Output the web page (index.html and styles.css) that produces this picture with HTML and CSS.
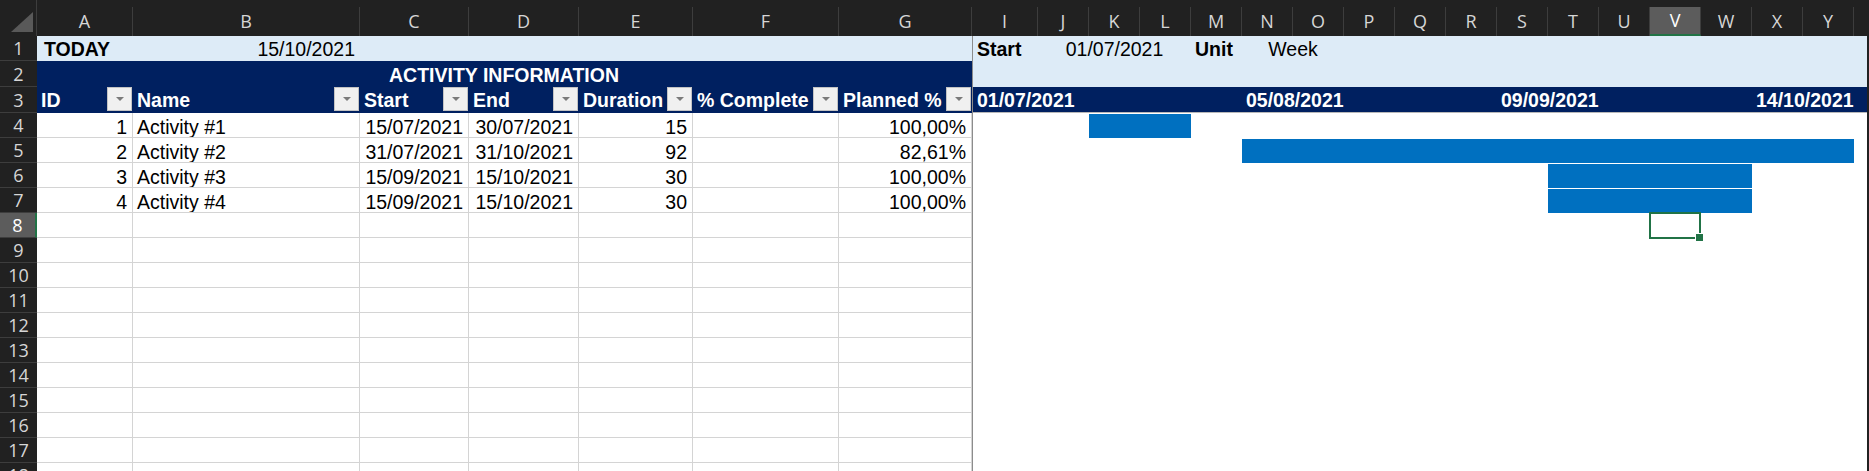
FILE: index.html
```html
<!DOCTYPE html>
<html lang="en">
<head>
  <meta charset="UTF-8" />
  <title>Gantt - Activity Information</title>
  <link rel="stylesheet" href="styles.css">
</head>
<body>

  <div class="top">
    <div class="corner">
      <svg width="22" height="20" viewBox="0 0 22 20"><polygon points="22,0 22,20 0,20" fill="#595959"/></svg>
    </div>
    <div class="ch w-a">A</div>
    <div class="ch w-b">B</div>
    <div class="ch w-c">C</div>
    <div class="ch w-d">D</div>
    <div class="ch w-e">E</div>
    <div class="ch w-f">F</div>
    <div class="ch w-g">G</div>
    <div class="ch w-i">I</div>
    <div class="ch w-wk">J</div>
    <div class="ch w-wk">K</div>
    <div class="ch w-wk">L</div>
    <div class="ch w-wk">M</div>
    <div class="ch w-wk">N</div>
    <div class="ch w-wk">O</div>
    <div class="ch w-wk">P</div>
    <div class="ch w-wk">Q</div>
    <div class="ch w-wk">R</div>
    <div class="ch w-wk">S</div>
    <div class="ch w-wk">T</div>
    <div class="ch w-wk">U</div>
    <div class="ch w-wk sel">V</div>
    <div class="ch w-wk">W</div>
    <div class="ch w-wk">X</div>
    <div class="ch w-wk">Y</div>
    <div class="ch w-z"></div>
  </div>

  <div class="main">
    <div class="rowhdr">
      <div class="rh">1</div>
      <div class="rh">2</div>
      <div class="rh">3</div>
      <div class="rh">4</div>
      <div class="rh">5</div>
      <div class="rh">6</div>
      <div class="rh">7</div>
      <div class="rh sel">8</div>
      <div class="rh">9</div>
      <div class="rh">10</div>
      <div class="rh">11</div>
      <div class="rh">12</div>
      <div class="rh">13</div>
      <div class="rh">14</div>
      <div class="rh">15</div>
      <div class="rh">16</div>
      <div class="rh">17</div>
      <div class="rh">18</div>
    </div>

    <!-- activity table -->
    <div class="left">
      <div class="c hd1 b today">TODAY</div>
      <div class="c hd1 num">15/10/2021</div>
      <div class="c hd1 fill"></div>

      <div class="c title">ACTIVITY INFORMATION</div>

      <div class="th"><span>ID</span><span class="flt"></span></div>
      <div class="th"><span>Name</span><span class="flt"></span></div>
      <div class="th"><span>Start</span><span class="flt"></span></div>
      <div class="th"><span>End</span><span class="flt"></span></div>
      <div class="th"><span>Duration</span><span class="flt"></span></div>
      <div class="th"><span>% Complete</span><span class="flt"></span></div>
      <div class="th"><span>Planned %</span><span class="flt"></span></div>

      <div class="c num">1</div><div class="c">Activity #1</div><div class="c num">15/07/2021</div><div class="c num">30/07/2021</div><div class="c num">15</div><div class="c"></div><div class="c num">100,00%</div>
      <div class="c num">2</div><div class="c">Activity #2</div><div class="c num">31/07/2021</div><div class="c num">31/10/2021</div><div class="c num">92</div><div class="c"></div><div class="c num">82,61%</div>
      <div class="c num">3</div><div class="c">Activity #3</div><div class="c num">15/09/2021</div><div class="c num">15/10/2021</div><div class="c num">30</div><div class="c"></div><div class="c num">100,00%</div>
      <div class="c num">4</div><div class="c">Activity #4</div><div class="c num">15/09/2021</div><div class="c num">15/10/2021</div><div class="c num">30</div><div class="c"></div><div class="c num">100,00%</div>

      <div class="c"></div><div class="c"></div><div class="c"></div><div class="c"></div><div class="c"></div><div class="c"></div><div class="c"></div>
      <div class="c"></div><div class="c"></div><div class="c"></div><div class="c"></div><div class="c"></div><div class="c"></div><div class="c"></div>
      <div class="c"></div><div class="c"></div><div class="c"></div><div class="c"></div><div class="c"></div><div class="c"></div><div class="c"></div>
      <div class="c"></div><div class="c"></div><div class="c"></div><div class="c"></div><div class="c"></div><div class="c"></div><div class="c"></div>
      <div class="c"></div><div class="c"></div><div class="c"></div><div class="c"></div><div class="c"></div><div class="c"></div><div class="c"></div>
      <div class="c"></div><div class="c"></div><div class="c"></div><div class="c"></div><div class="c"></div><div class="c"></div><div class="c"></div>
      <div class="c"></div><div class="c"></div><div class="c"></div><div class="c"></div><div class="c"></div><div class="c"></div><div class="c"></div>
      <div class="c"></div><div class="c"></div><div class="c"></div><div class="c"></div><div class="c"></div><div class="c"></div><div class="c"></div>
      <div class="c"></div><div class="c"></div><div class="c"></div><div class="c"></div><div class="c"></div><div class="c"></div><div class="c"></div>
      <div class="c"></div><div class="c"></div><div class="c"></div><div class="c"></div><div class="c"></div><div class="c"></div><div class="c"></div>
      <div class="c"></div><div class="c"></div><div class="c"></div><div class="c"></div><div class="c"></div><div class="c"></div><div class="c"></div>
    </div>

    <!-- gantt chart, one column per week -->
    <div class="right">
      <div class="band"></div>
      <div class="lbl b start">Start</div>
      <div class="lbl start-date">01/07/2021</div>
      <div class="lbl b unit">Unit</div>
      <div class="lbl unit-val">Week</div>

      <div class="scale"></div>
      <div class="tick t1">01/07/2021</div>
      <div class="tick t2">05/08/2021</div>
      <div class="tick t3">09/09/2021</div>
      <div class="tick t4">14/10/2021</div>

      <div class="bar" style="grid-area: 4 / 3 / 5 / 5"></div>
      <div class="bar" style="grid-area: 5 / 6 / 6 / 18"></div>
      <div class="bar" style="grid-area: 6 / 12 / 7 / 16"></div>
      <div class="bar" style="grid-area: 7 / 12 / 8 / 16"></div>

      <div class="cursor"></div>
    </div>
  </div>

</body>
</html>
```

FILE: styles.css
```css
* {
  margin: 0;
  padding: 0;
  box-sizing: border-box;
}
body {
  width: 1869px;
  height: 471px;
  overflow: hidden;
  background: #212121;
  font-family: "Liberation Sans", Arial, sans-serif;
  font-size: 19.5px;
  color: #000;
}

/* column letters */
.top {
  display: flex;
  align-items: flex-end;
  height: 36px;
}
.corner {
  width: 37px;
  height: 36px;
  display: flex;
  align-items: flex-end;
  justify-content: flex-end;
  padding: 0 3px 4px 0;
  border-right: 1px solid #3d3d3d;
}
.ch {
  height: 29px;
  border-right: 1px solid #3d3d3d;
  color: #d6d6d6;
  font-family: "Open Sans", sans-serif;
  font-size: 18px;
  line-height: 29px;
  text-align: center;
}
.ch.sel {
  background: #5c5c5c;
  border-bottom: 2px solid #217346;
  line-height: 27px;
  color: #fff;
}
.w-a { width: 96px; }
.w-b { width: 227px; }
.w-c { width: 109px; }
.w-d { width: 110px; }
.w-e { width: 114px; }
.w-f { width: 146px; }
.w-g { width: 133px; }
.w-i { width: 66px; }
.w-wk { width: 51px; }
.w-z { width: 13px; border-right: none; }

.main {
  display: flex;
  height: 435px;
  overflow: hidden;
}

/* row numbers */
.rowhdr {
  width: 37px;
  flex-shrink: 0;
  display: grid;
  grid-template-rows: 25px 26px 26px repeat(15, 25px);
}
.rh {
  display: flex;
  align-items: center;
  justify-content: center;
  border-bottom: 1px solid #3d3d3d;
  color: #d6d6d6;
  font-family: "Open Sans", sans-serif;
  font-size: 18px;
}
.rh.sel {
  background: #5c5c5c;
  border-right: 2px solid #217346;
  color: #fff;
}

/* activity table */
.left {
  width: 935px;
  flex-shrink: 0;
  display: grid;
  grid-template-columns: 96px 227px 109px 110px 114px 146px 133px;
  grid-template-rows: 25px 26px 26px repeat(15, 25px);
  background: #fff;
}
.c {
  border-right: 1px solid #d4d4d4;
  border-bottom: 1px solid #d4d4d4;
  padding: 4px 5px 0 4px;
  line-height: 20px;
  white-space: nowrap;
  overflow: hidden;
}
.num {
  text-align: right;
}
.b {
  font-weight: bold;
}
.hd1 {
  background: #ddebf7;
  border: none;
  padding-top: 3px;
}
.today {
  padding-left: 7px;
}
.fill {
  grid-column: span 5;
}
.title {
  grid-column: 1 / -1;
  background: #002060;
  border: none;
  color: #fff;
  font-weight: bold;
  text-align: center;
}
.th {
  display: flex;
  background: #002060;
  color: #fff;
  font-weight: bold;
  white-space: nowrap;
}
.th span:first-child {
  padding: 3px 0 0 4px;
  line-height: 20px;
}
.flt {
  margin-left: auto;
  margin-right: 1px;
  width: 25px;
  height: 24px;
  display: flex;
  align-items: center;
  justify-content: center;
  background: #f0f0f0;
  border: 1px solid #c3c3c3;
}
.flt::after {
  content: "";
  border-left: 4px solid transparent;
  border-right: 4px solid transparent;
  border-top: 4px solid #7a7a7a;
}

/* gantt */
.right {
  width: 895px;
  flex-shrink: 0;
  display: grid;
  grid-template-columns: 65px repeat(16, 51px) 13px;
  grid-template-rows: 25px 26px 26px repeat(15, 25px);
  border-left: 1px solid #8c8c8c;
  background: #fff;
}
.band {
  grid-area: 1 / 1 / 3 / -1;
  background: #ddebf7;
}
.lbl {
  grid-row: 1;
  padding: 3px 0 0 4px;
  line-height: 20px;
  white-space: nowrap;
}
.start { grid-column: 1; }
.start-date { grid-column: 2 / 5; text-align: center; padding-left: 0; }
.unit { grid-column: 5; }
.unit-val { grid-column: 6 / 8; text-align: center; padding-left: 0; }
.scale {
  grid-area: 3 / 1 / 4 / -1;
  background: #002060;
  border-bottom: 1px solid #b8b8b8;
}
.tick {
  grid-row: 3;
  padding: 3px 0 0 4px;
  line-height: 20px;
  color: #fff;
  font-weight: bold;
  white-space: nowrap;
}
.t1 { grid-column: 1; }
.t2 { grid-column: 6; }
.t3 { grid-column: 11; }
.t4 { grid-column: 16; }
.bar {
  margin-top: 1px;
  background: #0070c0;
}
.cursor {
  grid-area: 8 / 14;
  position: relative;
  margin: -1px 0 -1px -1px;
  border: 2px solid #217346;
}
.cursor::after {
  content: "";
  position: absolute;
  right: -5px;
  bottom: -5px;
  width: 7px;
  height: 7px;
  background: #217346;
  border: 1px solid #fff;
}
```
